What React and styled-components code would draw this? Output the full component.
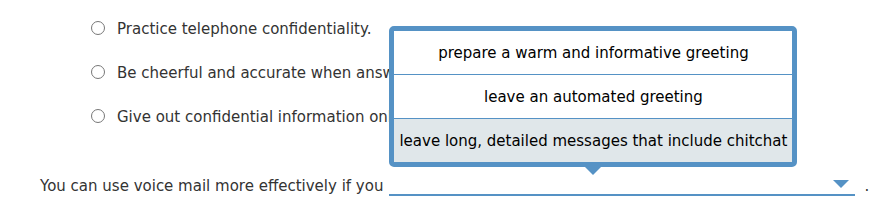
import React from "react";
import styled, { createGlobalStyle } from "styled-components";

const Global = createGlobalStyle`
  html, body { margin: 0; padding: 0; background: #fff; }
  body { font-family: "DejaVu Sans", Verdana, sans-serif; font-size: 15px; color: #333; }
`;

const Page = styled.div`
  width: 876px;
  height: 202px;
  position: relative;
  overflow: hidden;
`;

const Choices = styled.ul`
  list-style: none;
  margin: 0;
  padding: 19px 0 0 91px;
  display: flex;
  flex-direction: column;
  gap: 24px;
`;

const Choice = styled.li`
  display: flex;
  align-items: center;
  gap: 12px;
  height: 20px;
  white-space: nowrap;
`;

const Radio = styled.span`
  width: 12px;
  height: 12px;
  border: 1px solid #777;
  border-radius: 50%;
  flex: none;
  margin-top: -2px;
`;

const Sentence = styled.div`
  position: absolute;
  left: 40px;
  top: 174px;
  display: flex;
  align-items: flex-end;
  white-space: nowrap;
  line-height: 20px;
`;

const SelectWrap = styled.div`
  position: relative;
  width: 466px;
  height: 20px;
  margin-left: 6px;
  border-bottom: 2px solid #5592c5;
`;

const Caret = styled.span`
  position: absolute;
  right: 6px;
  top: 6px;
  width: 0;
  height: 0;
  border-left: 8px solid transparent;
  border-right: 8px solid transparent;
  border-top: 8px solid #5592c5;
`;

const Period = styled.span`
  margin-left: 9px;
`;

const Popup = styled.div`
  position: absolute;
  left: 0;
  bottom: 27px;
  width: 408px;
  box-sizing: border-box;
  border: 5px solid #5592c5;
  border-radius: 5px;
  background: #fff;
  display: flex;
  flex-direction: column;
  &::after {
    content: "";
    position: absolute;
    left: 50%;
    bottom: -13px;
    margin-left: -8px;
    border-left: 8px solid transparent;
    border-right: 8px solid transparent;
    border-top: 8px solid #5592c5;
  }
`;

const Option = styled.div`
  height: 43px;
  display: flex;
  align-items: center;
  justify-content: center;
  color: #000;
  background: ${(p) => (p.$active ? "#e0e7ea" : "#fff")};
  & + & {
    border-top: 1px solid #5592c5;
  }
`;

export default function App() {
  return (
    <Page>
      <Global />
      <Choices>
        <Choice><Radio />Practice telephone confidentiality.</Choice>
        <Choice><Radio />Be cheerful and accurate when answering the telephone.</Choice>
        <Choice><Radio />Give out confidential information only when authorized.</Choice>
      </Choices>
      <Sentence>
        You can use voice mail more effectively if you
        <SelectWrap>
          <Popup>
            <Option>prepare a warm and informative greeting</Option>
            <Option>leave an automated greeting</Option>
            <Option $active>leave long, detailed messages that include chitchat</Option>
          </Popup>
          <Caret />
        </SelectWrap>
        <Period>.</Period>
      </Sentence>
    </Page>
  );
}
